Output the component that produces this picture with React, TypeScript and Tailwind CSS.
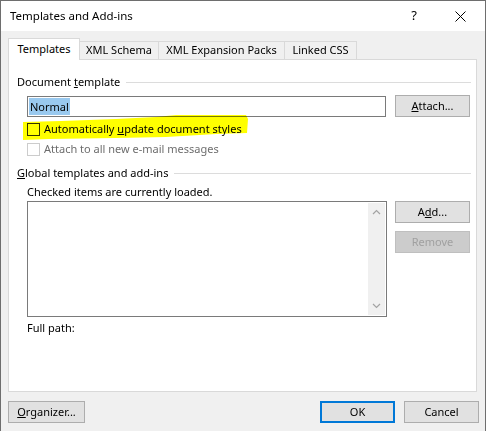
import React from 'react';

const font = { fontFamily: '"Noto Sans", "Open Sans", sans-serif' };

function Btn({ children, w, disabled, primary }: { children: React.ReactNode; w: string; disabled?: boolean; primary?: boolean }) {
  return (
    <div
      className={`${w} h-[22px] flex items-center justify-center text-[11px] ${
        disabled
          ? 'bg-[#cccccc] border border-[#bfbfbf] text-[#a0a0a0]'
          : primary
          ? 'bg-[#e1e1e1] border-2 border-[#0078d7] text-black'
          : 'bg-[#e1e1e1] border border-[#adadad] text-black'
      }`}
    >
      {children}
    </div>
  );
}

function GroupHeader({ children }: { children: React.ReactNode }) {
  return (
    <div className="flex items-center h-[16px] pl-[8px] pr-[5px]">
      <span className="whitespace-nowrap text-[11px] text-black">{children}</span>
      <div className="flex-1 ml-[6px] h-px bg-[#dcdcdc]" />
    </div>
  );
}

function Chevron({ up }: { up?: boolean }) {
  return (
    <svg width="9" height="6" viewBox="0 0 9 6">
      <path d={up ? 'M1 5 L4.5 1.5 L8 5' : 'M1 1 L4.5 4.5 L8 1'} fill="none" stroke="#a3a3a3" strokeWidth="1.2" />
    </svg>
  );
}

export default function App() {
  return (
    <div className="relative w-[486px] h-[431px] overflow-hidden bg-[#f0f0f0] border-l border-t border-r border-[#6e6e6e] flex flex-col" style={font}>
      {/* title bar */}
      <div className="h-[30px] bg-white flex items-center pl-[9px] shrink-0">
        <span className="text-[11.5px] text-black">Templates and Add-ins</span>
        <div className="flex-1" />
        <span className="text-[13px] text-black mr-[38px]">?</span>
        <svg width="11" height="11" viewBox="0 0 11 11" className="mr-[19px]">
          <path d="M0.5 0.5 L10.5 10.5 M10.5 0.5 L0.5 10.5" stroke="#000" strokeWidth="1" />
        </svg>
      </div>

      {/* tabs */}
      <div className="mt-[7px] ml-[7px] h-[21px] flex items-end shrink-0">
        <div className="relative z-10 w-[72px] h-[22px] -mb-px bg-white border-l border-t border-r border-[#d9d9d9] flex items-center justify-center text-[11px] text-black">
          Templates
        </div>
        <div className="-ml-px w-[80px] h-[18px] border-l border-t border-r border-[#d9d9d9] flex items-center justify-center text-[11px] text-black">
          XML Schema
        </div>
        <div className="-ml-px w-[127px] h-[18px] border-l border-t border-r border-[#d9d9d9] flex items-center justify-center text-[11px] text-black">
          XML Expansion Packs
        </div>
        <div className="-ml-px w-[73px] h-[18px] border-l border-t border-r border-[#d9d9d9] flex items-center justify-center text-[11px] text-black">
          Linked CSS
        </div>
      </div>

      {/* panel */}
      <div className="ml-[7px] w-[469px] h-[333px] bg-white border border-[#d9d9d9] flex flex-col pt-[14px] shrink-0">
        <GroupHeader>
          Document <span className="underline">t</span>emplate
        </GroupHeader>

        <div className="mt-[5px] ml-[18px] flex items-start">
          <div className="mt-px w-[359px] h-[21px] border border-[#7a7a7a] flex items-center pl-px">
            <span className="bg-[#99c9ef] text-[11px] text-black leading-[17px] px-px">Normal</span>
          </div>
          <div className="ml-[9px]">
            <Btn w="w-[75px]">
              <span className="underline">A</span>ttach...
            </Btn>
          </div>
        </div>

        <div className="mt-[4px] ml-[18px] h-[16px] flex items-center">
          <div className="w-[13px] h-[13px] border border-[#333333] bg-white" />
          <span className="ml-[4px] text-[11px] text-black">
            Automatically <span className="underline">u</span>pdate document styles
          </span>
        </div>
        <div className="mt-[4px] ml-[18px] h-[16px] flex items-center">
          <div className="w-[13px] h-[13px] border border-[#cccccc] bg-white" />
          <span className="ml-[4px] text-[11px] text-[#6d6d6d]">Attach to all new e-mail messages</span>
        </div>

        <div className="mt-[8px]">
          <GroupHeader>
            <span className="underline">G</span>lobal templates and add-ins
          </GroupHeader>
        </div>

        <div className="mt-[3px] ml-[18px] h-[16px] flex items-center text-[11px] text-black">
          Checked items are currently loaded.
        </div>

        <div className="mt-[1px] ml-[18px] flex items-start">
          <div className="w-[360px] h-[116px] border border-[#7a7a7a] bg-white flex justify-end p-px">
            <div className="w-[17px] h-full bg-[#f0f0f0] flex flex-col items-center justify-between py-[6px]">
              <Chevron up />
              <Chevron />
            </div>
          </div>
          <div className="ml-[8px] flex flex-col gap-[8px]">
            <Btn w="w-[75px]">
              A<span className="underline">d</span>d...
            </Btn>
            <Btn w="w-[75px]" disabled>
              Remove
            </Btn>
          </div>
        </div>

        <div className="mt-[3px] ml-[18px] h-[16px] flex items-center text-[11px] text-black">Full path:</div>
      </div>

      {/* bottom buttons */}
      <div className="mt-[9px] flex items-center pl-[7px] pr-[6px]">
        <Btn w="w-[77px]">
          <span className="underline">O</span>rganizer...
        </Btn>
        <div className="flex-1" />
        <Btn w="w-[75px]" primary>
          OK
        </Btn>
        <div className="ml-[9px]">
          <Btn w="w-[75px]">Cancel</Btn>
        </div>
      </div>

      {/* highlighter annotation */}
      <svg className="absolute left-0 top-0 pointer-events-none mix-blend-multiply" width="486" height="431" viewBox="0 0 486 431">
        <polygon
          points="22,121 60,120 115,118 155,116 175,114 245,114 247,118 246,132 215,133 165,136 115,137 48,138 22,139"
          fill="#ffff00"
        />
      </svg>
    </div>
  );
}
